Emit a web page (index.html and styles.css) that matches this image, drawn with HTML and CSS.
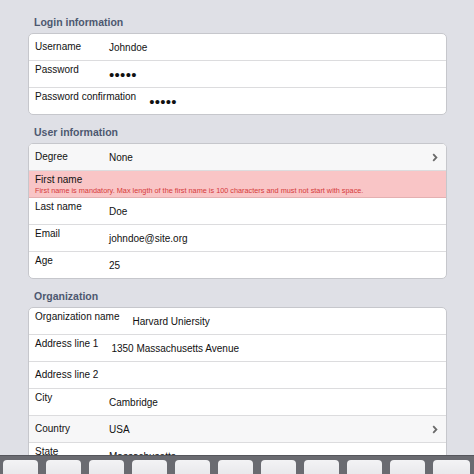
FILE: index.html
```html
<!DOCTYPE html>
<html>
<head>
<meta charset="utf-8">
<link rel="stylesheet" href="styles.css">
</head>
<body>
<div class="page">
  <div class="heading first">Login information</div>
  <div class="card">
    <div class="row"><span class="label">Username</span><span class="value">Johndoe</span></div>
    <div class="row top"><span class="label">Password</span><span class="value dots">•••••</span></div>
    <div class="row top"><span class="label">Password confirmation</span><span class="value dots">•••••</span></div>
  </div>

  <div class="heading">User information</div>
  <div class="card">
    <div class="row shaded"><span class="label">Degree</span><span class="value">None</span>
      <svg class="chev" width="6" height="9" viewBox="0 0 6 9"><polyline points="1.2,1.2 4.4,4.5 1.2,7.8" fill="none" stroke="#6a6a6a" stroke-width="1.8"/></svg>
    </div>
    <div class="row error">
      <span class="elabel">First name</span>
      <span class="emsg">First name is mandatory. Max length of the first name is 100 characters and must not start with space.</span>
    </div>
    <div class="row top"><span class="label">Last name</span><span class="value">Doe</span></div>
    <div class="row top"><span class="label">Email</span><span class="value">johndoe@site.org</span></div>
    <div class="row top"><span class="label">Age</span><span class="value">25</span></div>
  </div>

  <div class="heading">Organization</div>
  <div class="card">
    <div class="row top"><span class="label">Organization name</span><span class="value">Harvard Uniersity</span></div>
    <div class="row top"><span class="label">Address line 1</span><span class="value">1350 Massachusetts Avenue</span></div>
    <div class="row"><span class="label">Address line 2</span><span class="value"></span></div>
    <div class="row top"><span class="label">City</span><span class="value">Cambridge</span></div>
    <div class="row shaded"><span class="label">Country</span><span class="value">USA</span>
      <svg class="chev" width="6" height="9" viewBox="0 0 6 9"><polyline points="1.2,1.2 4.4,4.5 1.2,7.8" fill="none" stroke="#6a6a6a" stroke-width="1.8"/></svg>
    </div>
    <div class="row top"><span class="label">State</span><span class="value">Massachusetts</span></div>
  </div>
</div>

<div class="keyboard">
  <div class="key"></div><div class="key"></div><div class="key"></div><div class="key"></div>
  <div class="key"></div><div class="key"></div><div class="key"></div><div class="key"></div>
  <div class="key"></div><div class="key"></div><div class="key wide"></div>
</div>
</body>
</html>
```

FILE: styles.css
```css
html, body {
  margin: 0;
  padding: 0;
  height: 474px;
  overflow: hidden;
}

body {
  background: #dfe0e6;
  font-family: "Liberation Sans", Arial, sans-serif;
  color: #111111;
}

.page {
  padding: 5px 27px 0 28px;
}

.heading {
  padding: 10.5px 0 5.5px 6px;
  font-size: 10.5px;
  line-height: 12px;
  font-weight: bold;
  color: #4d5870;
}

.card {
  background: #ffffff;
  border: 1px solid #c6c7cc;
  border-radius: 5px;
  overflow: hidden;
}

.row {
  display: flex;
  height: 26px;
  border-bottom: 1px solid #dcdcde;
  padding: 0 8px 0 6px;
  font-size: 10px;
  line-height: 12px;
}

.row:last-child {
  border-bottom: none;
}

.label {
  min-width: 61px;
  margin-right: 13px;
  align-self: center;
  white-space: nowrap;
}

.row.top .label {
  align-self: flex-start;
  margin-top: 3px;
}

.value {
  align-self: center;
  white-space: nowrap;
  margin-top: 1px;
}

.dots {
  font-size: 15px;
  letter-spacing: 0.3px;
  line-height: 12px;
}

.shaded {
  background: #f7f7f8;
}

.chev {
  margin-left: auto;
  align-self: center;
}

.row.error {
  background: #f9c5c6;
  border-bottom-color: #e4b0b1;
  flex-direction: column;
  height: 26px;
}

.elabel {
  margin-top: 3px;
  font-size: 10px;
  line-height: 12px;
}

.emsg {
  font-size: 7.3px;
  line-height: 9px;
  color: #d53a3a;
  white-space: nowrap;
}

.keyboard {
  position: fixed;
  left: 0;
  right: 0;
  top: 455px;
  bottom: 0;
  background: #6a6b71;
  border-top: 1px solid #55565c;
  display: flex;
  gap: 8px;
  padding: 4px 0 0 3px;
  overflow: hidden;
}

.key {
  width: 35px;
  height: 26px;
  flex: none;
  border-radius: 4px;
  background: linear-gradient(#f3f3f5, #e0e0e4);
}

.key.wide {
  width: 37px;
}
```
